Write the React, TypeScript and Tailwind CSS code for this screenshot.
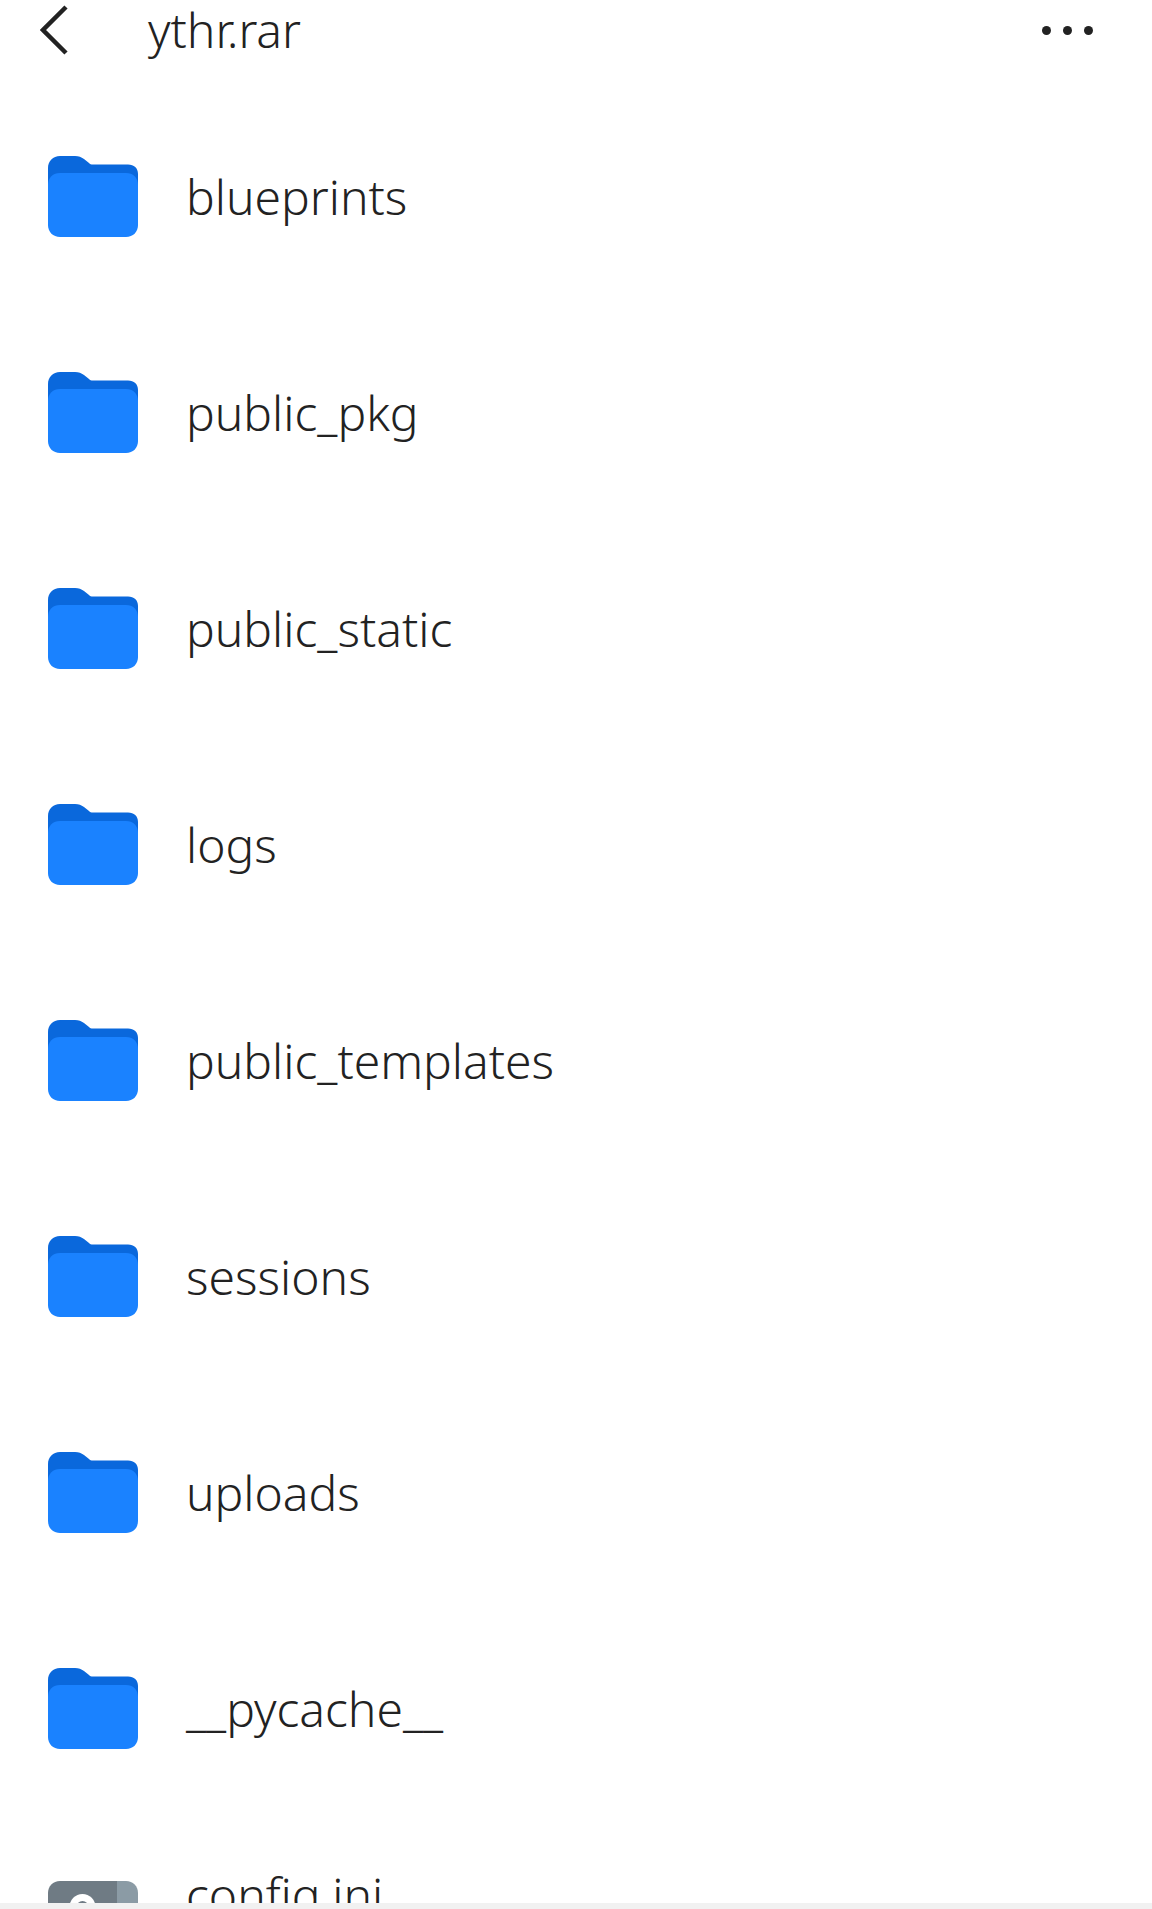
const rows = ["blueprints", "public_pkg", "public_static", "logs", "public_templates", "sessions", "uploads", "__pycache__"];

function Folder() {
  return (
    <svg width="90" height="81" viewBox="0 0 90 81" className="shrink-0">
      <path d="M0 12C0 5 5 0 12 0H27C31 0 33 1 36 3L41 7C42 8 43 8.500 45 8.500H80C86 8.500 90 12 90 18V50H0Z" fill="#0a68dc" />
      <path d="M0 29C0 21.500 5 17 12 17H78C85 17 90 21.500 90 29V69C90 76 85 81 78 81H12C5 81 0 76 0 69Z" fill="#1a82ff" />
    </svg>
  );
}

function IniIcon() {
  return (
    <svg width="90" height="81" viewBox="0 0 90 81" className="shrink-0">
      <path d="M12 0H69V81H12C5 81 0 76 0 69V12C0 5 5 0 12 0Z" fill="#6f7b84" />
      <path d="M69 0H78C85 0 90 5 90 12V69C90 76 85 81 78 81H69Z" fill="#8b9ba5" />
      <circle cx="34.500" cy="26" r="13" fill="#fff" />
      <circle cx="34.500" cy="26" r="6" fill="#6f7b84" />
    </svg>
  );
}

export default function App() {
  return (
    <div className="h-[1909px] w-[1152px] bg-white flex flex-col overflow-hidden text-[#222222] font-['Noto_Sans',sans-serif]">
      <header className="h-[60px] shrink-0 flex items-center pl-[40px] pr-[59px]">
        <svg width="28" height="50" viewBox="0 0 28 50" className="shrink-0" fill="none">
          <path d="M26 2L3 25L26 48" stroke="#222222" strokeWidth="4.500" />
        </svg>
        <h1 className="ml-[80px] text-[48px] font-[350] leading-[60px] flex-1">ythr.rar</h1>
        <div className="flex gap-[12px]">
          <span className="w-[9px] h-[9px] rounded-full bg-[#222222]" />
          <span className="w-[9px] h-[9px] rounded-full bg-[#222222]" />
          <span className="w-[9px] h-[9px] rounded-full bg-[#222222]" />
        </div>
      </header>
      <main className="flex-1 min-h-0 overflow-hidden pt-[28px]">
        {rows.map((r) => (
          <div key={r} className="h-[216px] flex items-center pl-[48px]">
            <Folder />
            <span className="ml-[48px] pt-[2px] text-[48px] font-[350] leading-[60px]">{r}</span>
          </div>
        ))}
        <div className="h-[216px] flex items-center pl-[48px] pb-[6px]">
          <IniIcon />
          <span className="ml-[48px] mb-[52px] text-[48px] font-[350] leading-[60px]">config.ini</span>
        </div>
      </main>
      <div className="h-[6px] shrink-0 bg-[#f1f1f1]" />
    </div>
  );
}
